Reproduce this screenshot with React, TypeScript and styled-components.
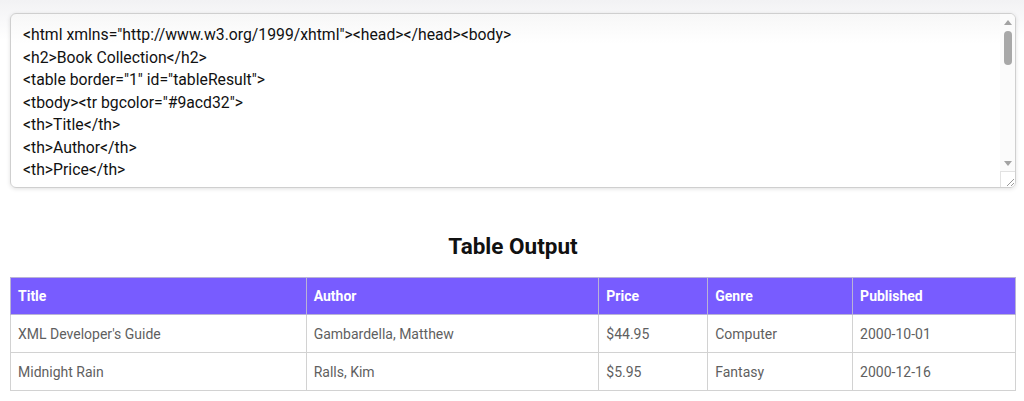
import React from 'react'
import styled, { createGlobalStyle } from 'styled-components'

const GlobalStyle = createGlobalStyle`
  html, body {
    margin: 0;
    padding: 0;
    background: linear-gradient(#f2f2f4 0, #ffffff 40px) no-repeat #fff;
    font-family: Roboto, 'Noto Sans', Arial, sans-serif;
  }
`

const Page = styled.div`
  padding: 13px 8px 0 10px;
`

const Editor = styled.div`
  display: flex;
  box-sizing: border-box;
  width: 1006px;
  height: 175px;
  border: 1px solid #cfcfcf;
  border-radius: 6px;
  box-shadow: 0 1px 4px rgba(0, 0, 0, 0.12);
  background: linear-gradient(#f7f7f7 0, #ffffff 30px);
  overflow: hidden;
`

// the visible window holds exactly seven lines, like the scrolled source box
const Source = styled.textarea`
  flex: 1;
  display: block;
  margin: 10px 0 6px;
  padding: 0 12px;
  border: none;
  background: transparent;
  color: #111;
  font-family: Roboto, 'Noto Sans', Arial, sans-serif;
  font-size: 15.75px;
  line-height: 22.5px;
  resize: none;
  overflow: hidden;
  outline: none;
`

const Rail = styled.div`
  width: 15px;
  display: flex;
  flex-direction: column;
  background: #fbfbfb;
`

const ArrowBox = styled.div`
  height: 16px;
  display: flex;
  align-items: center;
  justify-content: center;
`

const Arrow = styled.span<{ $down?: boolean }>`
  width: 0;
  height: 0;
  border-left: 4px solid transparent;
  border-right: 4px solid transparent;
  ${p =>
    p.$down
      ? 'border-top: 5px solid #a3a3a3;'
      : 'border-bottom: 5px solid #a3a3a3;'}
`

const Track = styled.div`
  flex: 1;
  display: flex;
  justify-content: center;
  padding-top: 1px;
`

const Thumb = styled.div`
  width: 8px;
  height: 34px;
  border-radius: 4px;
  background: #a8a8a8;
`

const Corner = styled.div`
  height: 16px;
  box-sizing: border-box;
  border-top: 1px solid #e2e2e2;
  border-left: 1px solid #e2e2e2;
  background: #fff;
  display: flex;
  align-items: flex-end;
  justify-content: flex-end;
`

const Heading = styled.h2`
  margin: 45px 0 18px;
  text-align: center;
  font-size: 22.5px;
  line-height: 26px;
  font-weight: 700;
  color: #111;
`

const Table = styled.table`
  width: 1006px;
  border-collapse: collapse;
  font-size: 14px;
`

const HeadCell = styled.th<{ $w: number }>`
  width: ${p => p.$w}px;
  height: 37px;
  padding: 0 7px;
  box-sizing: border-box;
  text-align: left;
  background: #785cff;
  color: #fff;
  font-weight: 700;
  border: 1px solid #b9b3d6;
`

const Cell = styled.td`
  height: 37px;
  padding: 0 7px;
  color: #5f5f5f;
  border: 1px solid #d2d2d2;
`

const source = `<html xmlns="http://www.w3.org/1999/xhtml"><head></head><body>
<h2>Book Collection</h2>
<table border="1" id="tableResult">
<tbody><tr bgcolor="#9acd32">
<th>Title</th>
<th>Author</th>
<th>Price</th>
<th>Genre</th>
<th>Published</th>
</tr>
<tr>
<td>XML Developer's Guide</td>
<td>Gambardella, Matthew</td>
<td>44.95</td>
<td>Computer</td>
<td>2000-10-01</td>
</tr>
<tr>
<td>Midnight Rain</td>
<td>Ralls, Kim</td>
<td>5.95</td>
<td>Fantasy</td>
<td>2000-12-16</td>
</tr>
</tbody></table>
</body></html>`

const columns = [
  { label: 'Title', width: 296 },
  { label: 'Author', width: 293 },
  { label: 'Price', width: 109 },
  { label: 'Genre', width: 145 },
  { label: 'Published', width: 163 },
]

const books = [
  ["XML Developer's Guide", 'Gambardella, Matthew', '$44.95', 'Computer', '2000-10-01'],
  ['Midnight Rain', 'Ralls, Kim', '$5.95', 'Fantasy', '2000-12-16'],
]

export default function App() {
  return (
    <>
      <GlobalStyle />
      <Page>
        <Editor>
          <Source defaultValue={source} spellCheck={false} />
          <Rail>
            <ArrowBox>
              <Arrow />
            </ArrowBox>
            <Track>
              <Thumb />
            </Track>
            <ArrowBox>
              <Arrow $down />
            </ArrowBox>
            <Corner>
              <svg width="12" height="12" viewBox="0 0 12 12">
                <path d="M11 4 L4 11 M11 8 L8 11" stroke="#9a9a9a" strokeWidth="1" />
              </svg>
            </Corner>
          </Rail>
        </Editor>
        <Heading>Table Output</Heading>
        <Table>
          <thead>
            <tr>
              {columns.map(c => (
                <HeadCell key={c.label} $w={c.width}>
                  {c.label}
                </HeadCell>
              ))}
            </tr>
          </thead>
          <tbody>
            {books.map(row => (
              <tr key={row[0]}>
                {row.map((v, i) => (
                  <Cell key={i}>{v}</Cell>
                ))}
              </tr>
            ))}
          </tbody>
        </Table>
      </Page>
    </>
  )
}
